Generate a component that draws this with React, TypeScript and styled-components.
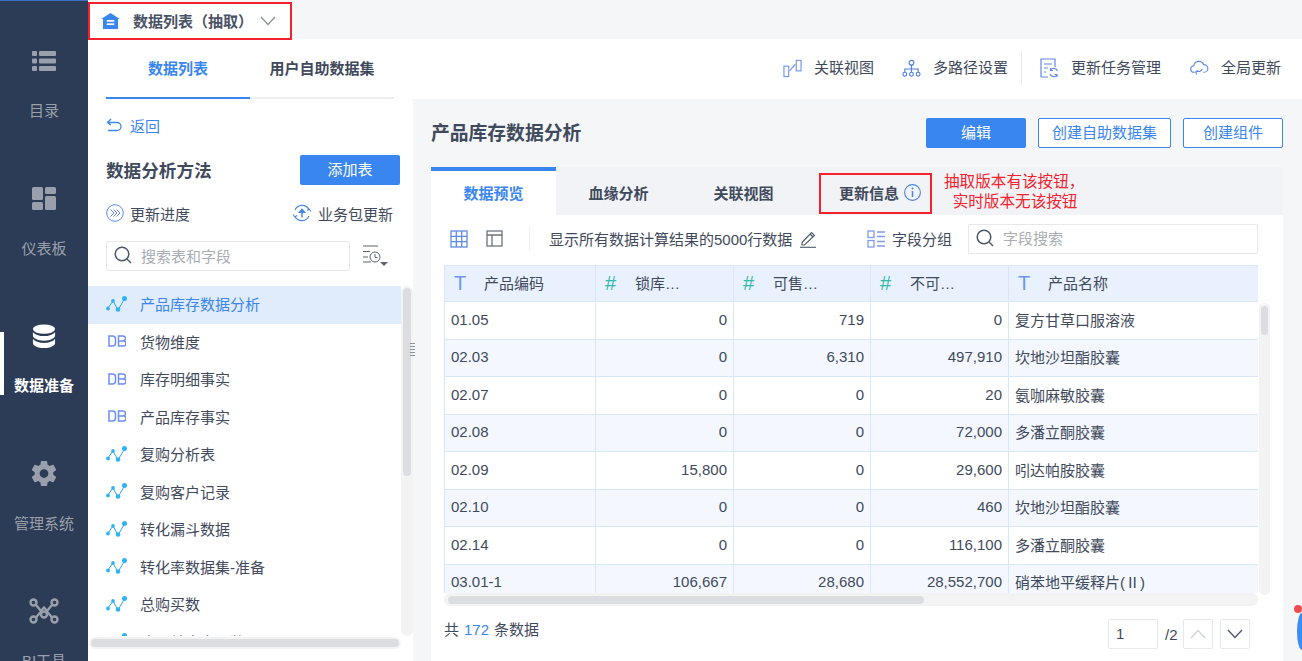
import React from "react";
import styled, { createGlobalStyle } from "styled-components";

const BLUE = "#3a86f0";
const TEXT = "#3f4a5c";
const RED = "#f5222d";

const GlobalStyle = createGlobalStyle`
  html, body {
    margin: 0;
    padding: 0;
    width: 1302px;
    height: 661px;
    overflow: hidden;
    background: #fff;
  }
  * {
    box-sizing: border-box;
  }
  body {
    font-family: "Liberation Sans", "Noto Sans CJK SC", sans-serif;
    font-size: 15px;
    color: ${TEXT};
  }
`;

const Page = styled.div`
  position: relative;
  display: flex;
  width: 1302px;
  height: 661px;
  overflow: hidden;
`;

/* ---------- sidebar ---------- */
const Sidebar = styled.nav`
  flex: 0 0 88px;
  height: 661px;
  overflow: hidden;
  padding-top: 42px;
  background: #2c3b56;
  border-top: 1px solid #3a6fc4;
  display: flex;
  flex-direction: column;
`;

const NavItem = styled.div<{ $active?: boolean }>`
  position: relative;
  flex: 0 0 137.5px;
  display: flex;
  flex-direction: column;
  align-items: center;
  color: ${(p) => (p.$active ? "#fff" : "#9aa0ab")};
  font-size: 15px;
  line-height: 20px;
  font-weight: ${(p) => (p.$active ? 700 : 400)};

  ${(p) =>
    p.$active &&
    `&::before {
      content: "";
      position: absolute;
      left: 0;
      top: 14px;
      width: 4px;
      height: 63px;
      background: #fff;
    }`}
`;

const NavIcon = styled.div`
  width: 30px;
  height: 36px;
  margin-bottom: 22px;
  display: flex;
  align-items: center;
  justify-content: center;
`;

/* ---------- main ---------- */
const Main = styled.div`
  flex: 1;
  min-width: 0;
  display: flex;
  flex-direction: column;
`;

const TopBar = styled.div`
  flex: 0 0 39px;
  height: 39px;
  min-height: 0;
  background: #f5f6f8;
  display: flex;
  align-items: flex-start;
`;

const PackTab = styled.div`
  position: relative;
  z-index: 1;
  flex: 0 0 204px;
  height: 38px;
  margin-top: 2px;
  border: 2px solid ${RED};
  background: #fff;
  display: flex;
  align-items: center;
  padding-left: 11px;
  font-size: 15px;
  font-weight: 700;
  color: #4a5365;
`;

const PackTitle = styled.span`
  margin: 0 0 2px 13px;
  width: 127px;
  white-space: nowrap;
`;

const NavRow = styled.div`
  flex: 0 0 60px;
  background: #fff;
  display: flex;
  justify-content: space-between;
  padding: 0 21px 0 18px;
`;

const ListTabs = styled.div`
  display: flex;
  width: 288px;
  height: 60px;
  border-bottom: 2px solid #eceef1;
`;

const ListTab = styled.div<{ $active?: boolean }>`
  width: 144px;
  height: 60px;
  padding-top: 20px;
  line-height: 20px;
  text-align: center;
  font-size: 15px;
  font-weight: 700;
  color: ${(p) => (p.$active ? BLUE : "#3f4a5c")};
  border-bottom: 2px solid ${(p) => (p.$active ? BLUE : "transparent")};
`;

const Actions = styled.div`
  display: flex;
  align-items: center;
  height: 58px;
`;

const ActionItem = styled.div<{ $gap: number }>`
  display: flex;
  align-items: center;
  gap: 12px;
  margin-left: ${(p) => p.$gap}px;
  font-size: 15px;
  white-space: nowrap;
`;

const ActionLabel = styled.span`
  margin-top: -3px;
`;

const ActionDivider = styled.div`
  width: 1px;
  height: 32px;
  margin-left: 13px;
  background: #e6e8ec;
`;

const Body = styled.div`
  flex: 1;
  min-height: 0;
  display: flex;
`;

/* ---------- left panel ---------- */
const LeftPanel = styled.aside`
  position: relative;
  flex: 0 0 325px;
  background: #fff;
  display: flex;
  flex-direction: column;
`;

const LeftHead = styled.div`
  padding: 0 13px 0 18px;
  height: 187px;
  flex: 0 0 187px;
`;

const BackLink = styled.div`
  display: flex;
  align-items: center;
  gap: 8px;
  height: 20px;
  margin-top: 16px;
  color: ${BLUE};
  font-size: 15px;
`;

const HeadRow = styled.div`
  display: flex;
  justify-content: space-between;
  align-items: center;
  margin-top: 20px;
`;

const PanelHeading = styled.h2`
  margin: 0 0 2px;
  font-size: 17.6px;
  font-weight: 700;
  color: #3f4a5c;
`;

const PrimaryButton = styled.button<{ $width: number }>`
  width: ${(p) => p.$width}px;
  height: 30px;
  padding: 0 0 3px;
  border: 0;
  border-radius: 2px;
  background: ${BLUE};
  color: #fff;
  font: inherit;
  font-size: 15px;
`;

const OutlineButton = styled.button<{ $width: number }>`
  width: ${(p) => p.$width}px;
  height: 30px;
  padding: 0 0 3px;
  border: 1px solid ${BLUE};
  border-radius: 2px;
  background: #fff;
  color: ${BLUE};
  font: inherit;
  font-size: 15px;
`;

const ProgressRow = styled.div`
  display: flex;
  justify-content: space-between;
  align-items: center;
  margin-top: 17px;
  height: 22px;
  padding-right: 7px;
`;

const ProgressItem = styled.div`
  display: flex;
  align-items: center;
  gap: 6px;
  font-size: 15px;
  white-space: nowrap;
`;

const SearchRow = styled.div`
  display: flex;
  align-items: center;
  margin-top: 17px;
`;

const SearchBox = styled.div<{ $width: number; $left?: number }>`
  width: ${(p) => p.$width}px;
  height: 30px;
  margin-left: ${(p) => p.$left ?? 0}px;
  border: 1px solid #e6e8ec;
  border-radius: 2px;
  background: #fff;
  display: flex;
  align-items: center;
  padding: 0 0 2px 7px;
  gap: 9px;
  color: #a9adb5;
  font-size: 15px;
`;

const FilterButton = styled.div`
  margin-left: 13px;
  display: flex;
`;

const ListArea = styled.div`
  flex: 0 0 350px;
  display: flex;
  height: 350px;
`;

const TableList = styled.div`
  width: 313px;
  height: 350px;
  overflow: hidden;
`;

const ListRow = styled.div<{ $active?: boolean }>`
  height: 37.5px;
  display: flex;
  align-items: center;
  padding: 0 0 2px 18px;
  gap: 13px;
  font-size: 15px;
  white-space: nowrap;
  background: ${(p) => (p.$active ? "#e0ebfb" : "transparent")};
  color: ${(p) => (p.$active ? BLUE : TEXT)};
`;

const ListIcon = styled.div`
  width: 21px;
  display: flex;
  justify-content: center;
`;

const VTrack = styled.div<{ $width: number; $pad: number }>`
  flex: 0 0 ${(p) => p.$width}px;
  background: #f3f3f4;
  border-radius: 6px;
  padding: ${(p) => p.$pad}px 2px 0;
`;

const VThumb = styled.div<{ $height: number }>`
  height: ${(p) => p.$height}px;
  border-radius: 5px;
  background: #dcdde0;
`;

const LeftHScroll = styled.div`
  flex: 0 0 12px;
  width: 312px;
  margin: 1px 0 0 1px;
  padding: 2px;
  border-radius: 6px;
  background: #f3f3f4;
`;

const LeftHThumb = styled.div`
  height: 8px;
  border-radius: 4px;
  background: #dcdde0;
`;

const ResizeGrip = styled.div`
  position: absolute;
  right: -2px;
  top: 243px;
  width: 5px;
  height: 15px;
  background-image: radial-gradient(circle, #7d8695 0.8px, transparent 1px);
  background-size: 2.5px 3px;
`;

/* ---------- right panel ---------- */
const RightPanel = styled.section`
  flex: 1;
  min-width: 0;
  background: #f5f6f8;
  padding: 0 19px 0 18px;
  display: flex;
  flex-direction: column;
`;

const TitleRow = styled.div`
  flex: 0 0 68px;
  display: flex;
  align-items: center;
  justify-content: space-between;
`;

const PageTitle = styled.h1`
  margin: 0 0 3px;
  font-size: 18.8px;
  font-weight: 700;
  color: #3f4a5c;
`;

const ButtonRow = styled.div`
  display: flex;
  gap: 12px;
`;

const Card = styled.div`
  flex: 1;
  min-height: 0;
  background: #fff;
  display: flex;
  flex-direction: column;
`;

const CardTabs = styled.div`
  flex: 0 0 48px;
  display: flex;
  background: #f2f3f7;
`;

const CardTab = styled.div<{ $active?: boolean }>`
  width: 125px;
  height: 48px;
  display: flex;
  align-items: center;
  justify-content: center;
  padding-bottom: 1px;
  font-size: 15px;
  font-weight: 700;
  background: ${(p) => (p.$active ? "#fff" : "transparent")};
  color: ${(p) => (p.$active ? BLUE : TEXT)};
  border-top: 4px solid ${(p) => (p.$active ? BLUE : "transparent")};
`;

const MarkedTab = styled.div`
  width: 113px;
  height: 41px;
  margin: 6px 0 0 13px;
  border: 2px solid ${RED};
  display: flex;
  align-items: center;
  justify-content: flex-end;
  padding: 0 9px 2px 0;
  gap: 5px;
  font-size: 15px;
  font-weight: 700;
  white-space: nowrap;
`;

const Note = styled.div`
  margin: 5px 0 0 12px;
  color: ${RED};
  font-size: 15.6px;
  line-height: 20px;
  white-space: pre;
`;

const CardToolbar = styled.div`
  flex: 0 0 50px;
  display: flex;
  align-items: center;
  padding: 0 25px 3px 19px;
`;

const ToolIcon = styled.div<{ $gap: number; $left?: number }>`
  display: flex;
  margin-left: ${(p) => p.$left ?? 0}px;
  margin-right: ${(p) => p.$gap}px;
`;

const ToolDivider = styled.div`
  width: 1px;
  height: 24px;
  background: #eceef1;
  margin-right: 19px;
`;

const ToolText = styled.span`
  font-size: 15px;
  white-space: nowrap;
`;

const ToolPush = styled.div`
  flex: 1;
`;

const TableWrap = styled.div`
  flex: 0 0 341px;
  display: flex;
  padding-left: 13px;
  height: 341px;
`;

const TableArea = styled.div`
  width: 814px;
  height: 341px;
  display: flex;
  flex-direction: column;
`;

const TableClip = styled.div`
  flex: 0 0 328px;
  overflow: hidden;
`;

const DataTable = styled.table`
  width: 814px;
  table-layout: fixed;
  border-collapse: collapse;
  font-size: 15px;
`;

const HeadRowEl = styled.tr`
  height: 36px;
  background: #e8f1fd;
`;

const HeadCell = styled.th`
  border: 1px solid #d8e7f9;
  padding: 0 0 2px 9px;
  text-align: left;
  font-weight: 400;
  white-space: nowrap;
`;

const HeadInner = styled.div`
  display: flex;
  align-items: center;
`;

const TypeMark = styled.span<{ $kind: "T" | "#" }>`
  width: 30px;
  font-size: 20px;
  line-height: 20px;
  font-family: "Liberation Sans", sans-serif;
  font-weight: 400;
  color: ${(p) => (p.$kind === "T" ? "#6b96ee" : "#35b9a8")};
`;

const DataRow = styled.tr<{ $tint: boolean }>`
  height: 37.5px;
  background: ${(p) => (p.$tint ? "#f4f8fe" : "#fff")};
`;

const DataCell = styled.td<{ $num?: boolean }>`
  border: 1px solid #d8e7f9;
  padding: 0 6px 2px;
  text-align: ${(p) => (p.$num ? "right" : "left")};
  white-space: nowrap;
  overflow: hidden;
`;

const HTrack = styled.div`
  flex: 0 0 13px;
  padding: 3px 0 0 4px;
  background: #f3f3f4;
  border-radius: 6px;
`;

const HThumb = styled.div`
  width: 476px;
  height: 8px;
  border-radius: 4px;
  background: #dcdde0;
`;

const TableVScroll = styled.div`
  margin-top: 38px;
  height: 292px;
  width: 11px;
  flex: 0 0 11px;
  margin-left: 1px;
  padding: 3px 2px 0;
  border-radius: 6px;
  background: #f3f3f4;
`;

const Footer = styled.div`
  display: flex;
  justify-content: space-between;
  padding: 13px 33px 0 13px;
`;

const Total = styled.div`
  font-size: 15px;
  line-height: 22px;
`;

const TotalCount = styled.span`
  color: ${BLUE};
  margin: 0 5px;
`;

const Pager = styled.div`
  display: flex;
  align-items: center;
`;

const PageInput = styled.div`
  width: 50px;
  height: 30px;
  border: 1px solid #e6e8ec;
  border-radius: 2px;
  padding-left: 7px;
  line-height: 28px;
  font-size: 15px;
`;

const PageOf = styled.span`
  width: 25px;
  padding-left: 7px;
  font-size: 15px;
`;

const PageButton = styled.div`
  width: 30px;
  height: 30px;
  margin-right: 7px;
  border: 1px solid #e6e8ec;
  border-radius: 2px;
  display: flex;
  align-items: center;
  justify-content: center;

  &:last-child {
    margin-right: 0;
  }
`;

const FloatBall = styled.div`
  position: absolute;
  left: 1297px;
  top: 613px;
  width: 10px;
  height: 37px;
  border-radius: 50%;
  background: #3d8bf5;
`;

const FloatDot = styled.div`
  position: absolute;
  left: 1294px;
  top: 605px;
  width: 8px;
  height: 8px;
  border-radius: 50%;
  background: #ee4d50;
`;

/* ---------- icons ---------- */
const GREY = "#9aa0ab";

const CatalogIcon = () => (
  <svg width="24" height="22" viewBox="0 0 24 22" fill={GREY}>
    <rect x="0" y="1" width="5" height="5" rx="1" />
    <rect x="7" y="1" width="17" height="5" rx="1" />
    <rect x="0" y="8.500" width="5" height="5" rx="1" />
    <rect x="7" y="8.500" width="17" height="5" rx="1" />
    <rect x="0" y="16" width="5" height="5" rx="1" />
    <rect x="7" y="16" width="17" height="5" rx="1" />
  </svg>
);

const DashIcon = () => (
  <svg width="24" height="23" viewBox="0 0 24 23" fill={GREY}>
    <rect x="0" y="0" width="11" height="13" rx="1.500" />
    <rect x="13" y="0" width="11" height="7" rx="1.500" />
    <rect x="0" y="15" width="11" height="8" rx="1.500" />
    <rect x="13" y="9" width="11" height="14" rx="1.500" />
  </svg>
);

const DbIcon = () => (
  <svg width="24" height="25" viewBox="0 0 26 26" fill="#fff">
    <ellipse cx="13" cy="5" rx="12" ry="5" />
    <path d="M1 8c2 3 7 4.500 12 4.500S23 11 25 8v4c0 3-5 5.500-12 5.500S1 15 1 12z" />
    <path d="M1 15.500c2 3 7 4.500 12 4.500s10-1.500 12-4.500V20c0 3-5 5.500-12 5.500S1 23 1 20z" />
  </svg>
);

const GearIcon = () => (
  <svg width="31" height="31" viewBox="0 0 24 24" fill={GREY}>
    <path d="M19.430 12.980c.04-.32.070-.64.070-.98s-.03-.66-.07-.98l2.110-1.650a.5.5 0 0 0 .12-.64l-2-3.460a.5.5 0 0 0-.61-.22l-2.490 1a7.300 7.300 0 0 0-1.690-.98l-.38-2.650A.49.490 0 0 0 14 2h-4a.49.490 0 0 0-.49.420l-.38 2.650c-.61.250-1.170.590-1.690.98l-2.490-1a.5.5 0 0 0-.61.220l-2 3.460a.49.490 0 0 0 .12.640l2.110 1.650c-.04.320-.07.650-.07.980s.03.660.07.980l-2.110 1.650a.5.5 0 0 0-.12.640l2 3.460c.12.220.39.300.61.220l2.490-1c.520.400 1.080.730 1.690.980l.38 2.650c.03.240.24.420.49.420h4c.25 0 .46-.18.49-.42l.38-2.650c.61-.25 1.170-.59 1.690-.98l2.490 1c.23.090.49 0 .61-.22l2-3.460a.5.5 0 0 0-.12-.64zM12 15.500a3.500 3.500 0 1 1 0-7 3.500 3.500 0 0 1 0 7z" />
  </svg>
);

const BiIcon = () => (
  <svg width="30" height="26" viewBox="0 0 30 26" fill="none" stroke={GREY} strokeWidth="2.400">
    <circle cx="4.500" cy="4.500" r="3" />
    <circle cx="25.500" cy="4.500" r="3" />
    <circle cx="4.500" cy="21.500" r="3" />
    <circle cx="25.500" cy="21.500" r="3" />
    <circle cx="15" cy="16.500" r="3" />
    <path d="M7 7l5 6 3-3.500 3 3.500 5-6M7 19.500l5.500-6.500M23 19.500 17.500 13" />
  </svg>
);

const HomeIcon = () => (
  <svg width="19" height="16" viewBox="0 0 20 17" fill={BLUE}>
    <path d="M10 0 0 6.500h2V17h16V6.500h2z" />
    <rect x="6" y="7.500" width="8" height="1.800" fill="#fff" />
    <rect x="6" y="11" width="8" height="1.800" fill="#fff" />
  </svg>
);

const Chevron = ({ up, color, size = 16 }: { up?: boolean; color: string; size?: number }) => (
  <svg width={size} height={size * 0.6} viewBox="0 0 16 9.600" fill="none" stroke={color} strokeWidth="1.300">
    <path d={up ? "M1 9 8 1.500 15 9" : "M1 1l7 7.500L15 1"} />
  </svg>
);

const LinkViewIcon = () => (
  <svg width="19" height="19" viewBox="0 0 20 19" fill="none" stroke="#6f96ee" strokeWidth="1.200">
    <rect x="1" y="7" width="5" height="11" />
    <rect x="14" y="1" width="5" height="11" />
    <path d="M7 12l6-7" />
  </svg>
);

const PathIcon = () => (
  <svg width="19" height="19" viewBox="0 0 20 19" fill="none" stroke="#4f7fe0" strokeWidth="1.200">
    <circle cx="10" cy="3.500" r="2.500" />
    <circle cx="3" cy="15.500" r="2" />
    <circle cx="10" cy="15.500" r="2" />
    <circle cx="17" cy="15.500" r="2" />
    <path d="M10 6v7.500M3 13.500V10h14v3.500" />
  </svg>
);

const TaskIcon = () => (
  <svg width="19" height="20" viewBox="0 0 19 20" fill="none" stroke="#5f8ae8" strokeWidth="1.200">
    <path d="M8 19H1V1h14v8" />
    <path d="M4 6h8M4 10h4M4 14h2" />
    <path d="M17.500 13a4 4 0 0 0-7-1M10 16a4 4 0 0 0 7 1" />
    <path d="M10.500 10v2.500H13M17 19v-2.500h-2.500" />
  </svg>
);

const CloudIcon = () => (
  <svg width="19" height="16" viewBox="0 0 20 16" fill="none" stroke="#5f8ae8" strokeWidth="1.200">
    <path d="M5 12.500H4.500a3.500 3.500 0 0 1-.5-7A5.500 5.500 0 0 1 14.500 4.500 4 4 0 0 1 15 12.500h-1" />
    <path d="M13 9a3.500 3.500 0 0 1-6 1.500M7 15l-1-3 3-.5" />
  </svg>
);

const BackIcon = () => (
  <svg width="16" height="14" viewBox="0 0 16 14" fill="none" stroke={BLUE} strokeWidth="1.300">
    <path d="M5 1 1.500 4.500 5 7" />
    <path d="M2 4.500h9a3.800 3.800 0 0 1 0 8H2" />
  </svg>
);

const ProgressIcon = () => (
  <svg width="18" height="18" viewBox="0 0 18 18" fill="none" stroke="#5f8ae8" strokeWidth="1">
    <circle cx="9" cy="9" r="8.300" />
    <path d="M4.500 5.500 8 9l-3.500 3.500M7.500 5.500 11 9l-3.500 3.500M10.500 5.500 14 9l-3.500 3.500" />
  </svg>
);

const UploadIcon = () => (
  <svg width="20" height="18" viewBox="0 0 20 18" fill="none" stroke="#4a86e8" strokeWidth="1.100">
    <path d="M17 5.500A7.800 7.800 0 0 0 3 6M3 12.500A7.800 7.800 0 0 0 17 12" />
    <path d="M19 7.500 17 5l-2 1.500M1 10.500 3 13l2-1.500" />
    <path d="M10 13.500V6" strokeWidth="1.500" />
    <path d="M7 8.500 10 5l3 3.500z" fill="#4a86e8" />
  </svg>
);

const SearchIcon = () => (
  <svg width="18" height="18" viewBox="0 0 18 18" fill="none" stroke="#4d5768" strokeWidth="1.500">
    <circle cx="8" cy="8" r="6.800" />
    <path d="M13 13l4 4" />
  </svg>
);

const FilterClockIcon = () => (
  <svg width="25" height="22" viewBox="0 0 25 22" fill="none" stroke="#5a6474" strokeWidth="1">
    <path d="M0 1h15M0 6.500h7M0 12h5M0 17h8" />
    <circle cx="12" cy="12" r="5" />
    <path d="M12 9v3.500h2.500" />
    <path d="M17 17h8l-4 4z" fill="#5a6474" stroke="none" />
  </svg>
);

const TrendIcon = () => (
  <svg width="21" height="16" viewBox="0 0 21 16" fill="none">
    <path d="M2 12 7 5l5 9L19 2" stroke="#2fa8ee" strokeWidth="1" />
    <circle cx="2" cy="12.500" r="1.900" fill="#2fb4f2" />
    <circle cx="7" cy="5" r="1.900" fill="#2fb4f2" />
    <circle cx="12" cy="13.500" r="2.300" fill="#2fb4f2" />
    <circle cx="18.500" cy="2.500" r="2.500" fill="#2fb4f2" />
  </svg>
);

const DbBadge = () => (
  <svg width="18" height="12" viewBox="0 0 18 12" fill="none" stroke="#6f8ff0" strokeWidth="1.500">
    <path d="M1 1h3.500a3 3 0 0 1 3 3v4a3 3 0 0 1-3 3H1z" />
    <path d="M10.500 1h4.500a2 2 0 0 1 0 5h-4.500zM10.500 6h5a2.500 2.500 0 0 1 0 5h-5z" />
  </svg>
);

const InfoIcon = () => (
  <svg width="17" height="17" viewBox="0 0 17 17" fill="none" stroke="#4a86e8" strokeWidth="1.100">
    <circle cx="8.500" cy="8.500" r="7.900" />
    <path d="M8.500 7v6" strokeWidth="1.500" />
    <circle cx="8.500" cy="4.600" r="1" fill="#4a86e8" stroke="none" />
  </svg>
);

const GridIcon = () => (
  <svg width="18" height="18" viewBox="0 0 18 18" fill="none" stroke="#5f8ae8" strokeWidth="1.300">
    <rect x="1" y="1" width="16" height="16" />
    <path d="M1 6.300h16M1 11.700h16M6.300 1v16M11.700 1v16" />
  </svg>
);

const LayoutIcon = () => (
  <svg width="17" height="17" viewBox="0 0 17 17" fill="none" stroke="#6b7280" strokeWidth="1.300">
    <rect x="1" y="1" width="15" height="15" />
    <path d="M1 5h15M6 5v11" />
  </svg>
);

const PencilIcon = () => (
  <svg width="18" height="18" viewBox="0 0 18 18" fill="none" stroke="#4d5768" strokeWidth="1.100">
    <path d="M3 12.500 12.500 2.500 15.500 5.500 5.500 15H3zM11 4l3 3" />
    <path d="M1 17.300h16" />
  </svg>
);

const GroupIcon = () => (
  <svg width="18" height="18" viewBox="0 0 18 18" fill="none" stroke="#7d9af0" strokeWidth="1.300">
    <rect x="1" y="1" width="6" height="6.500" />
    <rect x="1" y="10.500" width="6" height="6.500" />
    <path d="M10 2h8M10 6.500h8M10 11.500h8M10 16h8" />
  </svg>
);

/* ---------- data ---------- */
const navItems = [
  { icon: <CatalogIcon />, label: "目录" },
  { icon: <DashIcon />, label: "仪表板" },
  { icon: <DbIcon />, label: "数据准备", active: true },
  { icon: <GearIcon />, label: "管理系统" },
  { icon: <BiIcon />, label: "BI工具" },
];

const actions = [
  { icon: <LinkViewIcon />, label: "关联视图", gap: 0 },
  { icon: <PathIcon />, label: "多路径设置", gap: 28 },
  { icon: <TaskIcon />, label: "更新任务管理", gap: 18, divider: true },
  { icon: <CloudIcon />, label: "全局更新", gap: 29 },
];

const tableRows: { name: string; kind: "trend" | "db" }[] = [
  { name: "产品库存数据分析", kind: "trend" },
  { name: "货物维度", kind: "db" },
  { name: "库存明细事实", kind: "db" },
  { name: "产品库存事实", kind: "db" },
  { name: "复购分析表", kind: "trend" },
  { name: "复购客户记录", kind: "trend" },
  { name: "转化漏斗数据", kind: "trend" },
  { name: "转化率数据集-准备", kind: "trend" },
  { name: "总购买数", kind: "trend" },
  { name: "购买并合人员数", kind: "trend" },
];

const columns: { kind: "T" | "#"; label: string; width: number }[] = [
  { kind: "T", label: "产品编码", width: 151 },
  { kind: "#", label: "锁库…", width: 138 },
  { kind: "#", label: "可售…", width: 137 },
  { kind: "#", label: "不可…", width: 138 },
  { kind: "T", label: "产品名称", width: 250 },
];

const rows = [
  ["01.05", "0", "719", "0", "复方甘草口服溶液"],
  ["02.03", "0", "6,310", "497,910", "坎地沙坦酯胶囊"],
  ["02.07", "0", "0", "20", "氨咖麻敏胶囊"],
  ["02.08", "0", "0", "72,000", "多潘立酮胶囊"],
  ["02.09", "15,800", "0", "29,600", "吲达帕胺胶囊"],
  ["02.10", "0", "0", "460", "坎地沙坦酯胶囊"],
  ["02.14", "0", "0", "116,100", "多潘立酮胶囊"],
  ["03.01-1", "106,667", "28,680", "28,552,700", "硝苯地平缓释片(Ⅱ)"],
];

export default function App() {
  return (
    <Page>
      <GlobalStyle />
      <Sidebar>
        {navItems.map((item) => (
          <NavItem key={item.label} $active={item.active}>
            <NavIcon>{item.icon}</NavIcon>
            {item.label}
          </NavItem>
        ))}
      </Sidebar>

      <Main>
        <TopBar>
          <PackTab>
            <HomeIcon />
            <PackTitle>数据列表（抽取）</PackTitle>
            <Chevron color="#8a92a0" />
          </PackTab>
        </TopBar>

        <NavRow>
          <ListTabs>
            <ListTab $active>数据列表</ListTab>
            <ListTab>用户自助数据集</ListTab>
          </ListTabs>
          <Actions>
            {actions.map((a) => (
              <React.Fragment key={a.label}>
                {a.divider && <ActionDivider />}
                <ActionItem $gap={a.gap}>
                  {a.icon}
                  <ActionLabel>{a.label}</ActionLabel>
                </ActionItem>
              </React.Fragment>
            ))}
          </Actions>
        </NavRow>

        <Body>
          <LeftPanel>
            <LeftHead>
              <BackLink>
                <BackIcon />
                返回
              </BackLink>
              <HeadRow>
                <PanelHeading>数据分析方法</PanelHeading>
                <PrimaryButton $width={100}>添加表</PrimaryButton>
              </HeadRow>
              <ProgressRow>
                <ProgressItem>
                  <ProgressIcon />
                  更新进度
                </ProgressItem>
                <ProgressItem>
                  <UploadIcon />
                  业务包更新
                </ProgressItem>
              </ProgressRow>
              <SearchRow>
                <SearchBox $width={244}>
                  <SearchIcon />
                  搜索表和字段
                </SearchBox>
                <FilterButton>
                  <FilterClockIcon />
                </FilterButton>
              </SearchRow>
            </LeftHead>
            <ListArea>
              <TableList>
                {tableRows.map((row, i) => (
                  <ListRow key={row.name} $active={i === 0}>
                    <ListIcon>{row.kind === "trend" ? <TrendIcon /> : <DbBadge />}</ListIcon>
                    {row.name}
                  </ListRow>
                ))}
              </TableList>
              <VTrack $width={12} $pad={2}>
                <VThumb $height={188} />
              </VTrack>
            </ListArea>
            <LeftHScroll>
              <LeftHThumb />
            </LeftHScroll>
            <ResizeGrip />
          </LeftPanel>

          <RightPanel>
            <TitleRow>
              <PageTitle>产品库存数据分析</PageTitle>
              <ButtonRow>
                <PrimaryButton $width={100}>编辑</PrimaryButton>
                <OutlineButton $width={133}>创建自助数据集</OutlineButton>
                <OutlineButton $width={100}>创建组件</OutlineButton>
              </ButtonRow>
            </TitleRow>

            <Card>
              <CardTabs>
                <CardTab $active>数据预览</CardTab>
                <CardTab>血缘分析</CardTab>
                <CardTab>关联视图</CardTab>
                <MarkedTab>
                  更新信息
                  <InfoIcon />
                </MarkedTab>
                <Note>{"抽取版本有该按钮，\n  实时版本无该按钮"}</Note>
              </CardTabs>

              <CardToolbar>
                <ToolIcon $gap={18}>
                  <GridIcon />
                </ToolIcon>
                <ToolIcon $gap={26}>
                  <LayoutIcon />
                </ToolIcon>
                <ToolDivider />
                <ToolText>显示所有数据计算结果的5000行数据</ToolText>
                <ToolIcon $gap={0} $left={7}>
                  <PencilIcon />
                </ToolIcon>
                <ToolPush />
                <ToolIcon $gap={7}>
                  <GroupIcon />
                </ToolIcon>
                <ToolText>字段分组</ToolText>
                <SearchBox $width={290} $left={16}>
                  <SearchIcon />
                  字段搜索
                </SearchBox>
              </CardToolbar>

              <TableWrap>
                <TableArea>
                  <TableClip>
                    <DataTable>
                      <colgroup>
                        {columns.map((c) => (
                          <col key={c.label} width={c.width} />
                        ))}
                      </colgroup>
                      <thead>
                        <HeadRowEl>
                          {columns.map((c) => (
                            <HeadCell key={c.label}>
                              <HeadInner>
                                <TypeMark $kind={c.kind}>{c.kind}</TypeMark>
                                {c.label}
                              </HeadInner>
                            </HeadCell>
                          ))}
                        </HeadRowEl>
                      </thead>
                      <tbody>
                        {rows.map((row, i) => (
                          <DataRow key={row[0]} $tint={i % 2 === 1}>
                            {row.map((cell, j) => (
                              <DataCell key={j} $num={j > 0 && j < 4}>
                                {cell}
                              </DataCell>
                            ))}
                          </DataRow>
                        ))}
                      </tbody>
                    </DataTable>
                  </TableClip>
                  <HTrack>
                    <HThumb />
                  </HTrack>
                </TableArea>
                <TableVScroll>
                  <VThumb $height={29} />
                </TableVScroll>
              </TableWrap>

              <Footer>
                <Total>
                  共<TotalCount>172</TotalCount>条数据
                </Total>
                <Pager>
                  <PageInput>1</PageInput>
                  <PageOf>/2</PageOf>
                  <PageButton>
                    <Chevron up color="#cfd3da" />
                  </PageButton>
                  <PageButton>
                    <Chevron color="#4d5768" />
                  </PageButton>
                </Pager>
              </Footer>
            </Card>
          </RightPanel>
        </Body>
      </Main>

      <FloatDot />
      <FloatBall />
    </Page>
  );
}
